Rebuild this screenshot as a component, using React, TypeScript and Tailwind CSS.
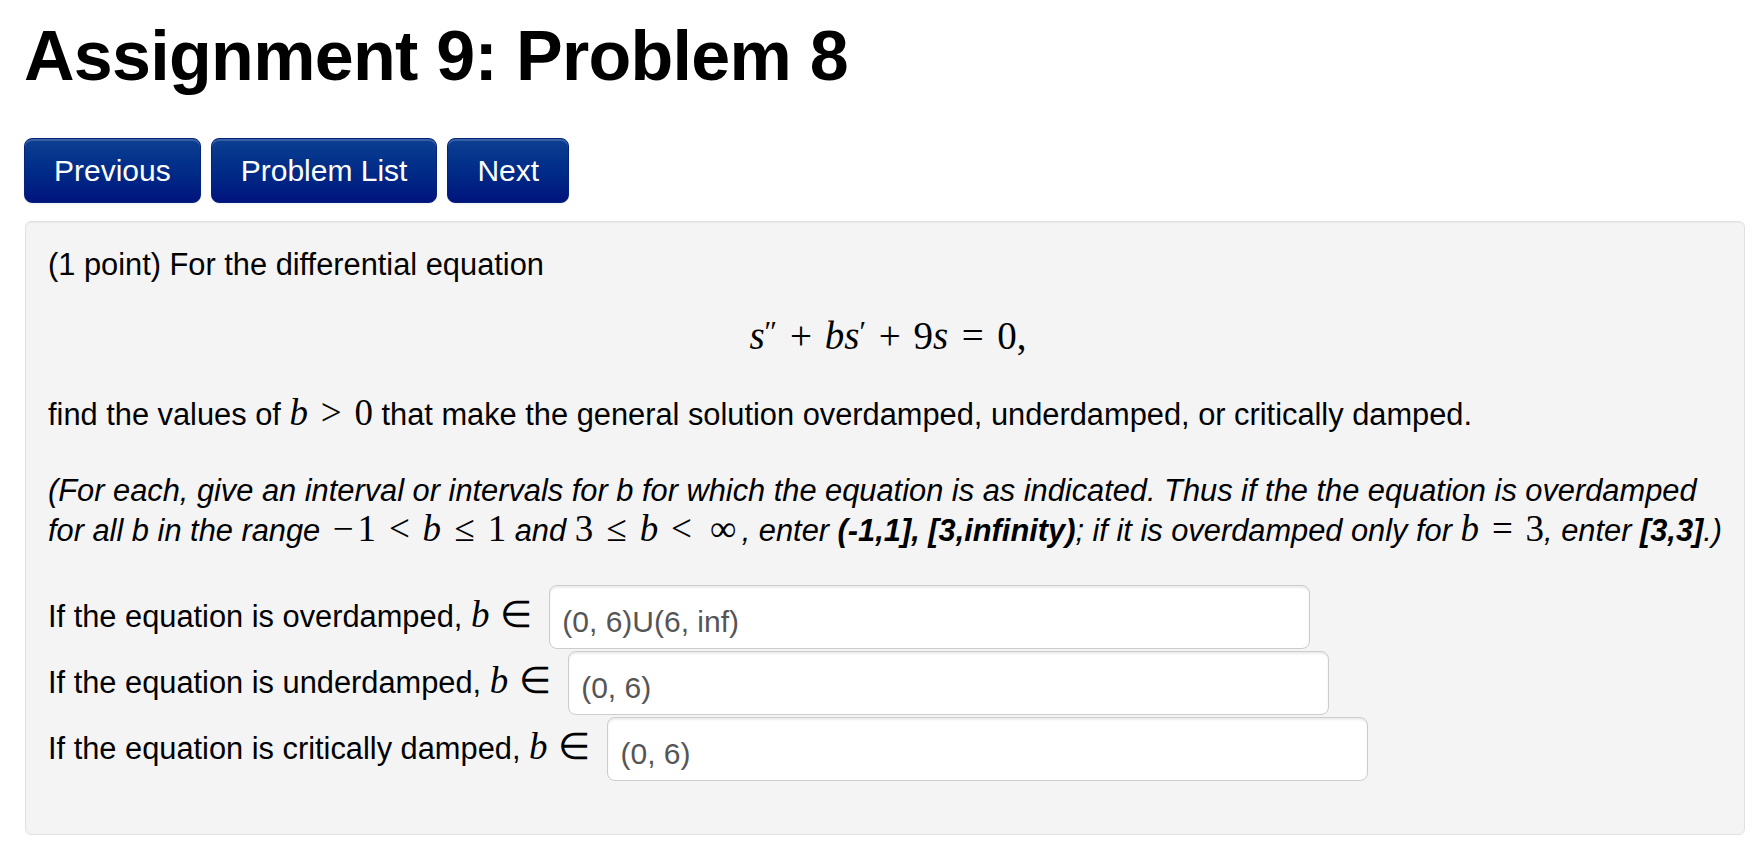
import React from "react"

const buttons = ["Previous", "Problem List", "Next"]

type C = { children: React.ReactNode }

// math run, set in a serif at MathJax-like size
function M({ children }: C) {
  return <span className="whitespace-nowrap font-['Liberation_Serif','Times_New_Roman',serif] not-italic font-normal text-[37px] leading-[30px]">{children}</span>
}
function V({ children }: C) {
  return <span className="italic">{children}</span>
}
function Rel({ children }: C) {
  return <span className="mx-[0.24em] inline-block w-[0.778em] text-center">{children}</span>
}
function Bin({ children }: C) {
  return <span className="mx-[0.222em] inline-block w-[0.778em] text-center">{children}</span>
}

const rows = [
  { label: "If the equation is overdamped,", value: "(0, 6)U(6, inf)" },
  { label: "If the equation is underdamped,", value: "(0, 6)" },
  { label: "If the equation is critically damped,", value: "(0, 6)" },
]

export default function App() {
  return (
    <div className="min-h-[852px] bg-white pl-[24px] pr-[19px] pt-[17px] font-['Liberation_Sans',Arial,sans-serif] text-black">
      {/* Title */}
      <h1 className="text-[70px] font-bold leading-[78px] tracking-[-0.01em]">Assignment 9: Problem 8</h1>

      {/* Nav buttons */}
      <div className="mt-[43px] flex gap-[10px]">
        {buttons.map((b) => (
          <button
            key={b}
            className="h-[65px] rounded-[8px] border border-[#06237a] bg-gradient-to-b from-[#0d3f91] to-[#00137e] px-[29px] text-[30px] leading-none text-white shadow-[inset_0_2px_0_rgba(255,255,255,0.18),0_1px_2px_rgba(0,0,0,0.08)]"
          >
            {b}
          </button>
        ))}
      </div>

      {/* Problem panel */}
      <div className="ml-px mt-[18px] rounded-[6px] border border-[#e1e1e1] bg-[#f4f4f4] pb-[53px] pl-[22px] pr-[16px] pt-[23px] text-[30.8px] leading-[40px] shadow-[inset_0_1px_1px_rgba(0,0,0,0.04)]">
        <p>(1 point) For the differential equation</p>

        <div className="mt-[34px] h-[40px] text-center leading-[40px]">
          <span className="whitespace-nowrap font-['Liberation_Serif','Times_New_Roman',serif] text-[39px] leading-[30px]">
            <V>s</V>
            <span className="relative -top-[8px] text-[30px]">″</span>
            <Bin>+</Bin>
            <V>bs</V>
            <span className="relative -top-[8px] text-[30px]">′</span>
            <Bin>+</Bin>
            9<V>s</V>
            <Rel>=</Rel>
            0,
          </span>
        </div>

        <p className="mt-[36px]">
          find the values of{" "}
          <M>
            <V>b</V>
            <Rel>&gt;</Rel>0
          </M>{" "}
          that make the general solution overdamped, underdamped, or critically damped.
        </p>

        <p className="mt-[36px] italic">
          <span className="block whitespace-nowrap">
            (For each, give an interval or intervals for b for which the equation is as indicated. Thus if the the equation is overdamped
          </span>
          <span className="block whitespace-nowrap">
            for all b in the range{" "}
            <M>
              <span className="inline-block w-[0.778em] text-center">−</span>1<Rel>&lt;</Rel>
              <V>b</V>
              <Rel>≤</Rel>1
            </M>{" "}
            and{" "}
            <M>
              3<Rel>≤</Rel>
              <V>b</V>
              <Rel>&lt;</Rel>
              <span className="inline-block w-[1em] text-center">∞</span>
            </M>
            , enter <b>(-1,1], [3,infinity)</b>; if it is overdamped only for{" "}
            <M>
              <V>b</V>
              <Rel>=</Rel>3
            </M>
            , enter <b>[3,3]</b>.)
          </span>
        </p>

        {/* Answer rows */}
        <div className="mt-[34px] flex flex-col gap-[2px]">
          {rows.map((r) => (
            <div key={r.label} className="flex items-center">
              <span className="whitespace-nowrap">
                {r.label}{" "}
                <M>
                  <V>b</V>
                  <span className="ml-[0.278em] inline-block w-[0.667em] text-center">∈</span>
                </M>
              </span>
              <div className="ml-[25px] h-[64px] w-[761px] rounded-[8px] border border-[#cccccc] bg-white pl-[12px] pt-[10px] text-[30px] leading-[52px] text-[#555555] shadow-[inset_0_2px_2px_rgba(0,0,0,0.08)]">
                {r.value}
              </div>
            </div>
          ))}
        </div>
      </div>
    </div>
  )
}
